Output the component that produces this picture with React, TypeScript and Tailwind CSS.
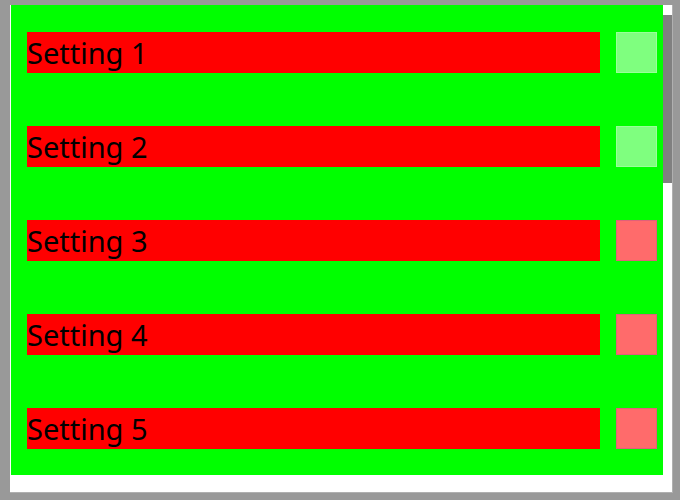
import React from "react";

const rows = [
  { label: "Setting 1", on: true },
  { label: "Setting 2", on: true },
  { label: "Setting 3", on: false },
  { label: "Setting 4", on: false },
  { label: "Setting 5", on: false },
];

export default function App() {
  return (
    <div className="w-[680px] h-[500px] bg-[#999999] pt-[5px] pl-[10px]">
      <div className="flex w-[663px] h-[488px] bg-white border-r border-b border-[#b0b0b0] pl-px">
        <div className="flex flex-col">
          <div className="flex flex-col gap-[53px] w-[652px] h-[470px] bg-[#00ff00] pt-[27px] pl-[16px] pr-[6px]">
            {rows.map((r) => (
              <div key={r.label} className="flex items-center h-[41px]">
                <div
                  className="flex-1 h-[41px] bg-[#ff0000] text-black text-[29px] leading-[41px] whitespace-nowrap"
                  style={{ fontFamily: '"Noto Sans", sans-serif' }}
                >
                  {r.label}
                </div>
                {r.on ? (
                  <div className="ml-[16px] w-[41px] h-[41px] bg-[#7fff7f] border border-[#99ff99]" />
                ) : (
                  <div className="ml-[16px] w-[41px] h-[41px] bg-[#ff6b6b] border border-[#e0607a]" />
                )}
              </div>
            ))}
          </div>
        </div>
        <div className="flex flex-col w-[9px] pt-[10px]">
          <div className="h-[168px] bg-[#808080]" />
        </div>
      </div>
    </div>
  );
}
